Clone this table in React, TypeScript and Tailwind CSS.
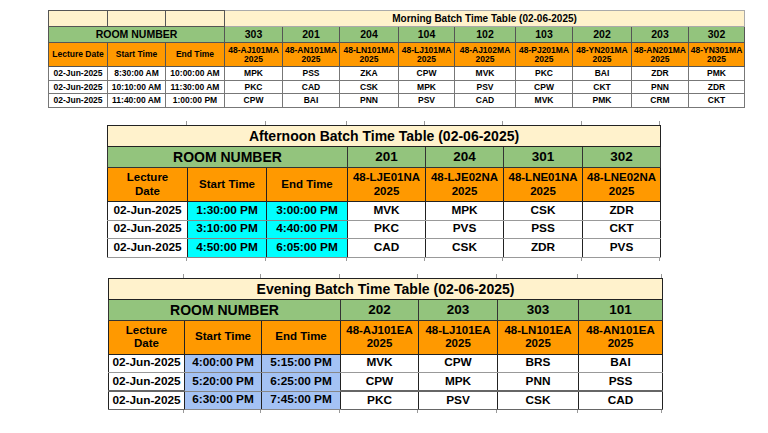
import React from "react";

const FONT = { fontFamily: '"Liberation Sans", Arial, sans-serif' };

const mRooms = ["303", "201", "204", "104", "102", "103", "202", "203", "302"];
const mCodes = ["48-AJ101MA", "48-AN101MA", "48-LN101MA", "48-LJ101MA", "48-AJ102MA", "48-PJ201MA", "48-YN201MA", "48-AN201MA", "48-YN301MA"];
const mRows = [
  ["02-Jun-2025", "8:30:00 AM", "10:00:00 AM", "MPK", "PSS", "ZKA", "CPW", "MVK", "PKC", "BAI", "ZDR", "PMK"],
  ["02-Jun-2025", "10:10:00 AM", "11:30:00 AM", "PKC", "CAD", "CSK", "MPK", "PSV", "CPW", "CKT", "PNN", "ZDR"],
  ["02-Jun-2025", "11:40:00 AM", "1:00:00 PM", "CPW", "BAI", "PNN", "PSV", "CAD", "MVK", "PMK", "CRM", "CKT"],
];
const mWidths = [59, 58, 59, 58, 57, 59, 56, 61, 57, 59, 57, 56];

const aRooms = ["201", "204", "301", "302"];
const aCodes = ["48-LJE01NA", "48-LJE02NA", "48-LNE01NA", "48-LNE02NA"];
const aRows = [
  ["02-Jun-2025", "1:30:00 PM", "3:00:00 PM", "MVK", "MPK", "CSK", "ZDR"],
  ["02-Jun-2025", "3:10:00 PM", "4:40:00 PM", "PKC", "PVS", "PSS", "CKT"],
  ["02-Jun-2025", "4:50:00 PM", "6:05:00 PM", "CAD", "CSK", "ZDR", "PVS"],
];
const aWidths = [80, 79, 81, 78, 78, 79, 78];

const eRooms = ["202", "203", "303", "101"];
const eCodes = ["48-AJ101EA", "48-LJ101EA", "48-LN101EA", "48-AN101EA"];
const eRows = [
  ["02-Jun-2025", "4:00:00 PM", "5:15:00 PM", "MVK", "CPW", "BRS", "BAI"],
  ["02-Jun-2025", "5:20:00 PM", "6:25:00 PM", "CPW", "MPK", "PNN", "PSS"],
  ["02-Jun-2025", "6:30:00 PM", "7:45:00 PM", "PKC", "PSV", "CSK", "CAD"],
];
const eWidths = [76, 77, 79, 78, 79, 81, 84];

function MorningTable() {
  return (
    <table className="table-fixed border-collapse w-[696px] text-black font-bold text-center" style={FONT}>
      <colgroup>
        {mWidths.map((w, i) => (
          <col key={i} style={{ width: w }} />
        ))}
      </colgroup>
      <tbody>
        <tr className="h-[16px]">
          <td className="bg-[#fff2cc] border border-[#555] p-0"></td>
          <td className="bg-[#fff2cc] border border-[#555] p-0"></td>
          <td className="bg-[#fff2cc] border border-[#555] p-0"></td>
          <td colSpan={9} className="bg-[#fff2cc] border border-[#aaa] p-0 text-[10px] leading-none">
            Morning Batch Time Table (02-06-2025)
          </td>
        </tr>
        <tr className="h-[16px]">
          <td colSpan={3} className="bg-[#93c47d] border border-[#555] p-0 text-[10.5px] leading-none">
            ROOM NUMBER
          </td>
          {mRooms.map((r) => (
            <td key={r} className="bg-[#93c47d] border border-[#555] p-0 text-[10.5px] leading-none">
              {r}
            </td>
          ))}
        </tr>
        <tr className="h-[24px]">
          <td className="bg-[#ff9900] border border-[#555] p-0 text-[8.5px] leading-[9px] whitespace-nowrap">Lecture Date</td>
          <td className="bg-[#ff9900] border border-[#555] p-0 text-[8.5px] leading-[9px]">Start Time</td>
          <td className="bg-[#ff9900] border border-[#555] p-0 text-[8.5px] leading-[9px]">End Time</td>
          {mCodes.map((c) => (
            <td key={c} className="bg-[#ff9900] border border-[#555] p-0 text-[8.5px] leading-[9px] whitespace-nowrap">
              {c}
              <br />
              2025
            </td>
          ))}
        </tr>
        {mRows.map((row, ri) => (
          <tr key={ri} className="h-[13.7px]">
            {row.map((v, ci) => (
              <td
                key={ci}
                className={
                  ri === 2
                    ? "bg-white border border-[#777] border-t-[#222] p-0 text-[8.5px] leading-none whitespace-nowrap"
                    : "bg-white border border-[#777] p-0 text-[8.5px] leading-none whitespace-nowrap"
                }
              >
                {v}
              </td>
            ))}
          </tr>
        ))}
      </tbody>
    </table>
  );
}

function BigTable({
  title,
  widths,
  rooms,
  codes,
  rows,
  timeBg,
}: {
  title: string;
  widths: number[];
  rooms: string[];
  codes: string[];
  rows: string[][];
  timeBg: "cyan" | "blue";
}) {
  const total = widths.reduce((a, b) => a + b, 0);
  const timeCls =
    timeBg === "cyan"
      ? "bg-[#00ffff] border border-[#222] border-y-[#888] p-0 text-[11.8px] leading-none whitespace-nowrap"
      : "bg-[#a4c2f4] border border-[#222] border-y-[#888] p-0 text-[11.8px] leading-none whitespace-nowrap";
  return (
    <div className="flex flex-col" style={{ width: total }}>
      <div className="flex h-[4px]">
        {widths.map((w, i) => (
          <div key={i} className="h-full border-r border-[#999]" style={{ width: w }} />
        ))}
      </div>
      <table className="table-fixed border-collapse text-black font-bold text-center" style={{ ...FONT, width: total }}>
        <colgroup>
          {widths.map((w, i) => (
            <col key={i} style={{ width: w }} />
          ))}
        </colgroup>
        <tbody>
          <tr className="h-[21px]">
            <td colSpan={widths.length} className="bg-[#fff2cc] border border-[#222] p-0 text-[14px] leading-none">
              {title}
            </td>
          </tr>
          <tr className="h-[21px]">
            <td colSpan={3} className="bg-[#93c47d] border border-[#333] p-0 text-[14px] leading-none">
              ROOM NUMBER
            </td>
            {rooms.map((r) => (
              <td key={r} className="bg-[#93c47d] border border-[#333] p-0 text-[13.5px] leading-none">
                {r}
              </td>
            ))}
          </tr>
          <tr className="h-[34px]">
            <td className="bg-[#ff9900] border border-[#222] p-0 text-[11.5px] leading-[13.5px]">
              Lecture
              <br />
              Date
            </td>
            <td className="bg-[#ff9900] border border-[#222] p-0 text-[11.5px] leading-[13.5px]">Start Time</td>
            <td className="bg-[#ff9900] border border-[#222] p-0 text-[11.5px] leading-[13.5px]">End Time</td>
            {codes.map((c) => (
              <td key={c} className="bg-[#ff9900] border border-[#222] p-0 text-[11.5px] leading-[13.5px] whitespace-nowrap">
                {c}
                <br />
                2025
              </td>
            ))}
          </tr>
          {rows.map((row, ri) => (
            <tr key={ri} className="h-[18.5px]">
              {row.map((v, ci) => (
                <td
                  key={ci}
                  className={
                    ci === 1 || ci === 2
                      ? timeCls
                      : ri === 2 && timeBg === "blue"
                      ? "bg-white border border-[#222] border-y-[#666] border-t-2 p-0 text-[11.8px] leading-none whitespace-nowrap"
                      : "bg-white border border-[#222] border-y-[#999] p-0 text-[11.8px] leading-none whitespace-nowrap"
                  }
                >
                  {v}
                </td>
              ))}
            </tr>
          ))}
        </tbody>
      </table>
      <div className="flex h-[3px]">
        {widths.map((w, i) => (
          <div key={i} className="h-full border-r border-[#999]" style={{ width: w }} />
        ))}
      </div>
    </div>
  );
}

export default function App() {
  return (
    <div className="w-[768px] h-[433px] bg-white overflow-hidden flex flex-col pt-[10px]">
      <div className="ml-[48px]">
        <MorningTable />
      </div>
      <div className="ml-[107px] mt-[13px]">
        <BigTable title="Afternoon Batch Time Table (02-06-2025)" widths={aWidths} rooms={aRooms} codes={aCodes} rows={aRows} timeBg="cyan" />
      </div>
      <div className="ml-[108px] mt-[13px]">
        <BigTable title="Evening Batch Time Table (02-06-2025)" widths={eWidths} rooms={eRooms} codes={eCodes} rows={eRows} timeBg="blue" />
      </div>
    </div>
  );
}
